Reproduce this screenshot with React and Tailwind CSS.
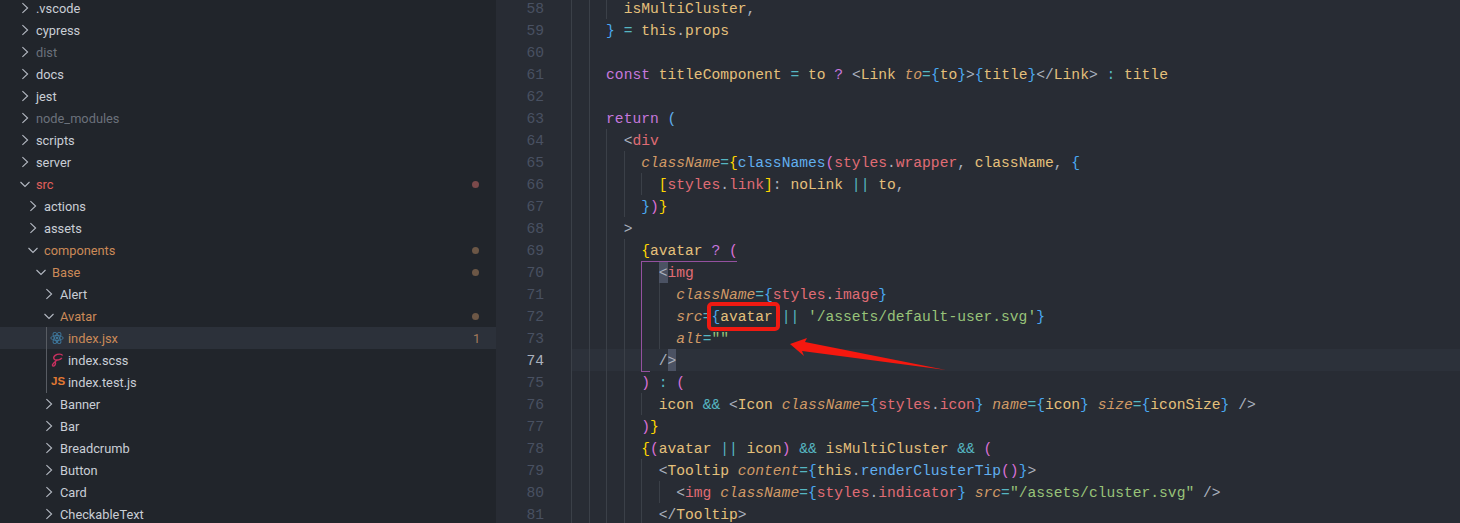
const colors = {
  v: "text-[#e5c07b]",
  p: "text-[#abb2bf]",
  r: "text-[#e06c75]",
  k: "text-[#c678dd]",
  c: "text-[#56b6c2]",
  f: "text-[#61afef]",
  s: "text-[#98c379]",
  a: "text-[#d19a66] italic",
  y: "text-[#ffd700]",
  m: "text-[#da70d6]",
  b: "text-[#4aa8f2]",
  o: "text-[#d19a66]",
};

const files = [
  { name: ".vscode", depth: 0 },
  { name: "cypress", depth: 0 },
  { name: "dist", depth: 0, tone: "text-[#6b717b]" },
  { name: "docs", depth: 0 },
  { name: "jest", depth: 0 },
  { name: "node_modules", depth: 0, tone: "text-[#6b717b]" },
  { name: "scripts", depth: 0 },
  { name: "server", depth: 0 },
  { name: "src", depth: 0, open: true, tone: "text-[#e2605c]", dot: "bg-[#7b4a4b]" },
  { name: "actions", depth: 1 },
  { name: "assets", depth: 1 },
  { name: "components", depth: 1, open: true, tone: "text-[#cb8a58]", dot: "bg-[#6c5746]" },
  { name: "Base", depth: 2, open: true, tone: "text-[#cb8a58]", dot: "bg-[#6c5746]" },
  { name: "Alert", depth: 3 },
  { name: "Avatar", depth: 3, open: true, tone: "text-[#cb8a58]", dot: "bg-[#6c5746]" },
  { name: "index.jsx", file: "react", tone: "text-[#cb8a58]", active: true, count: "1" },
  { name: "index.scss", file: "sass" },
  { name: "index.test.js", file: "js" },
  { name: "Banner", depth: 3 },
  { name: "Bar", depth: 3 },
  { name: "Breadcrumb", depth: 3 },
  { name: "Button", depth: 3 },
  { name: "Card", depth: 3 },
  { name: "CheckableText", depth: 3 },
];

const depths = ["pl-[20px]", "pl-[28px]", "pl-[36px]", "pl-[44px]"];

// each line: number, column of the text, guide count, tokens
const lines = [
  [58, 6, 3, [["isMultiCluster", "v"], [",", "p"]]],
  [59, 4, 2, [["}", "b"], [" ", "p"], ["=", "c"], [" this", "v"], [".", "p"], ["props", "v"]]],
  [60, 0, 2, []],
  [61, 4, 2, [["const", "k"], [" titleComponent ", "v"], ["=", "c"], [" to ", "v"], ["?", "k"], [" ", "p"], ["<", "p"], ["Link", "v"], [" ", "p"], ["to", "a"], ["=", "c"], ["{", "b"], ["to", "v"], ["}", "b"], [">", "p"], ["{", "b"], ["title", "v"], ["}", "b"], ["</", "p"], ["Link", "v"], [">", "p"], [" ", "p"], [":", "c"], [" title", "v"]]],
  [62, 0, 2, []],
  [63, 4, 2, [["return", "k"], [" ", "p"], ["(", "f"]]],
  [64, 6, 3, [["<", "p"], ["div", "r"]]],
  [65, 8, 4, [["className", "a"], ["=", "c"], ["{", "y"], ["classNames", "f"], ["(", "m"], ["styles", "r"], [".", "p"], ["wrapper", "r"], [", ", "p"], ["className", "v"], [", ", "p"], ["{", "b"]]],
  [66, 10, 5, [["[", "y"], ["styles", "r"], [".", "p"], ["link", "r"], ["]", "y"], [": ", "p"], ["noLink ", "v"], ["||", "c"], [" to", "v"], [",", "p"]]],
  [67, 8, 4, [["}", "b"], [")", "m"], ["}", "y"]]],
  [68, 6, 3, [[">", "p"]]],
  [69, 8, 4, [["{", "y"], ["avatar ", "v"], ["?", "k"], [" ", "p"], ["(", "m"]]],
  [70, 10, 5, [["<", "p", "bg-[#4b5263]"], ["img", "r"]], true],
  [71, 12, 6, [["className", "a"], ["=", "c"], ["{", "b"], ["styles", "r"], [".", "p"], ["image", "r"], ["}", "b"]], true],
  [72, 12, 6, [["src", "a"], ["=", "c"], ["{", "b"], ["avatar ", "v"], ["||", "c"], [" ", "p"], ["'/assets/default-user.svg'", "s"], ["}", "b"]], true],
  [73, 12, 6, [["alt", "a"], ["=", "c"], ['""', "s"]], true],
  [74, 10, 5, [["/", "p"], [">", "p", "bg-[#4b5263]"]], true],
  [75, 8, 4, [[")", "m"], [" ", "p"], [":", "c"], [" ", "p"], ["(", "m"]]],
  [76, 10, 5, [["icon ", "v"], ["&&", "c"], [" ", "p"], ["<", "p"], ["Icon", "v"], [" ", "p"], ["className", "a"], ["=", "c"], ["{", "b"], ["styles", "r"], [".", "p"], ["icon", "r"], ["}", "b"], [" ", "p"], ["name", "a"], ["=", "c"], ["{", "b"], ["icon", "v"], ["}", "b"], [" ", "p"], ["size", "a"], ["=", "c"], ["{", "b"], ["iconSize", "v"], ["}", "b"], [" ", "p"], ["/>", "p"]]],
  [77, 8, 4, [[")", "m"], ["}", "y"]]],
  [78, 8, 4, [["{", "y"], ["(", "m"], ["avatar ", "v"], ["||", "c"], [" icon", "v"], [")", "m"], [" ", "p"], ["&&", "c"], [" isMultiCluster ", "v"], ["&&", "c"], [" ", "p"], ["(", "m"]]],
  [79, 10, 5, [["<", "p"], ["Tooltip", "v"], [" ", "p"], ["content", "a"], ["=", "c"], ["{", "b"], ["this", "v"], [".", "p"], ["renderClusterTip", "f"], ["()", "m"], ["}", "b"], [">", "p"]]],
  [80, 12, 6, [["<", "p"], ["img", "r"], [" ", "p"], ["className", "a"], ["=", "c"], ["{", "b"], ["styles", "r"], [".", "p"], ["indicator", "r"], ["}", "b"], [" ", "p"], ["src", "a"], ["=", "c"], ['"/assets/cluster.svg"', "s"], [" ", "p"], ["/>", "p"]]],
  [81, 10, 5, [["</", "p"], ["Tooltip", "v"], [">", "p"]]],
];

const Chevron = ({ open }) => (
  <svg width="10" height="16" viewBox="0 0 10 16" fill="none" stroke="#b4b9c2" strokeWidth="1.1" className="mr-[6px] shrink-0">
    <path d={open ? "M0.5 6L5 10.5L9.5 6" : "M2.4 3.2L7.6 8L2.4 12.8"} />
  </svg>
);

const FileIcon = ({ type }) => {
  if (type === "js") {
    return <span className="w-[18px] shrink-0 pl-px font-['Liberation_Sans',sans-serif] text-[11.5px] font-bold text-[#e37933]">JS</span>;
  }
  if (type === "react") {
    return (
      <span className="w-[18px] shrink-0">
        <svg width="14" height="14" viewBox="-7 -7 14 14" fill="none" stroke="#3f7aa0" strokeWidth="0.9">
          <ellipse rx="6.2" ry="2.5" />
          <ellipse rx="6.2" ry="2.5" transform="rotate(60)" />
          <ellipse rx="6.2" ry="2.5" transform="rotate(120)" />
          <circle r="1" fill="#3f7aa0" />
        </svg>
      </span>
    );
  }
  return (
    <span className="w-[18px] shrink-0">
      <svg width="14" height="14" viewBox="0 0 14 14" fill="none" stroke="#c8305f" strokeWidth="1.4">
        <path d="M12.6 2.6C11.8 0.6 7.5 0.7 5.2 2.4C3.4 3.8 3.2 5.7 4.8 6.6C6.8 7.6 10.6 6.8 11.8 4.8M7.4 6.8C5.8 8 3.4 9.6 2.6 11.6C2.1 13 3.6 13.6 4.6 12.6C5.8 11.4 5.6 9.8 5 8.6" />
      </svg>
    </span>
  );
};

const TreeRow = ({ item }) => (
  <div className={"relative flex h-[22px] shrink-0 items-center pr-[17px] " + (item.active ? "bg-[#2c313a] " : "") + (item.file ? "pl-[50px]" : depths[item.depth])}>
    {item.file ? <FileIcon type={item.file} /> : <Chevron open={item.open} />}
    <span className={"mt-[2px] leading-[18px] " + (item.tone || "text-[#c9ced6]")}>{item.name}</span>
    <span className="ml-auto flex w-[8px] justify-center">
      {item.dot && <span className={"h-[7px] w-[7px] rounded-full " + item.dot}></span>}
      {item.count && <span className="ml-[3px] mt-[2px] leading-[18px] text-[#a5795c]">{item.count}</span>}
    </span>
    {item.file && <span className="absolute top-0 bottom-0 left-[46px] w-px bg-[#585c63]"></span>}
  </div>
);

const Guides = ({ col, levels, active }) => {
  const cells = [];
  for (let i = 0; i < col / 2 || i < levels; i++) {
    let line = "";
    if (i < levels) line = active && i === 4 ? "border-l border-[#94519f]" : "border-l border-[#3b4048]";
    cells.push(<span key={i} className={"h-full w-[17.56px] shrink-0 " + line}></span>);
  }
  return cells;
};

const CodeLine = ({ line }) => {
  const [num, col, levels, tokens, active] = line;
  const current = num === 74;
  return (
    <div className="flex h-[22px] shrink-0">
      <span className={"w-[48px] shrink-0 text-right " + (current ? "text-[#abb2bf]" : "text-[#495162]")}>{num}</span>
      <div className={"ml-[27px] flex min-w-0 flex-1 " + (current ? "bg-[#2c313a]" : "")}>
        <Guides col={col} levels={levels} active={active} />
        <span className="whitespace-pre">
          {tokens.map(([text, color, bg], i) => (
            <span key={i} className={"inline-block h-[22px] " + colors[color] + " " + (bg || "")}>{text}</span>
          ))}
        </span>
      </div>
    </div>
  );
};

export default function App() {
  return (
    <div className="relative flex h-[523px] w-[1460px] overflow-hidden bg-[#282c34]">
      <aside className="-mt-[3px] flex w-[496px] shrink-0 flex-col bg-[#21252b] font-['Roboto',sans-serif] text-[12.8px]">
        {files.map((item) => (
          <TreeRow key={item.name} item={item} />
        ))}
      </aside>
      <main className="-mt-[3px] flex min-w-0 flex-1 flex-col font-['Liberation_Mono',monospace] text-[14.64px] leading-[24px]">
        {lines.map((line) => (
          <CodeLine key={line[0]} line={line} />
        ))}
      </main>

      {/* bracket pair guide */}
      <span className="absolute top-[261px] left-[641px] h-px w-[96px] bg-[#94519f]"></span>
      <span className="absolute top-[371px] left-[641px] h-px w-[9px] bg-[#94519f]"></span>

      {/* red annotation */}
      <span className="absolute top-[302px] left-[707px] h-[29px] w-[73px] rounded-[5px] border-[4px] border-[#f01a12]"></span>
      <svg className="absolute top-[330px] left-[785px]" width="170" height="45" viewBox="785 330 170 45">
        <polygon points="790,344 807,338 805,342 946,370 802,351 804,356" fill="#f5180f" />
      </svg>
    </div>
  );
}
